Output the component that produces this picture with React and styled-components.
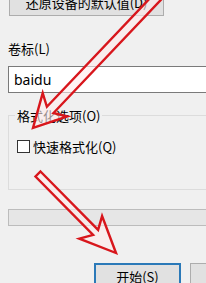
import styled, { createGlobalStyle } from "styled-components";

const GlobalStyle = createGlobalStyle`
  html, body {
    margin: 0;
    padding: 0;
    background: #f0f0f0;
    overflow: hidden;
  }
  body {
    font-family: "Noto Sans CJK SC", "Noto Sans", sans-serif;
    font-size: 13px;
    color: #000;
  }
`;

const Page = styled.div`
  position: relative;
  width: 206px;
  height: 283px;
  overflow: hidden;
  background: #f0f0f0;
`;

const Panel = styled.div`
  width: 240px;
  padding-left: 8px;
  display: flex;
  flex-direction: column;
  align-items: flex-start;
`;

const Button = styled.div`
  box-sizing: border-box;
  display: flex;
  align-items: center;
  justify-content: center;
  height: ${(p) => p.$h || 25}px;
  width: ${(p) => p.$w}px;
  flex-shrink: 0;
  background: #e1e1e1;
  border: ${(p) => (p.$primary ? "2px solid #2b79b8" : "1px solid #adadad")};
  font-size: 13px;
  line-height: 17px;
  white-space: nowrap;
`;

const ResetButton = styled(Button)`
  margin-top: -12px;
  margin-left: 1px;
`;

const Label = styled.div`
  margin-top: 24px;
  line-height: 17px;
  font-size: 13px;
`;

const TextInput = styled.div`
  box-sizing: border-box;
  margin-top: 9px;
  width: 100%;
  height: 27px;
  background: #fff;
  border: 1px solid #7a7a7a;
  padding-left: 5px;
  display: flex;
  align-items: center;
  font-family: "Noto Sans", "Open Sans", sans-serif;
  font-size: 14px;
`;

const Group = styled.fieldset`
  box-sizing: border-box;
  margin: 14px 0 0 0;
  width: 100%;
  height: 83px;
  border: 1px solid #dcdcdc;
  padding: 0 0 0 6px;
`;

const Legend = styled.legend`
  padding: 0 2px;
  line-height: 17px;
  font-size: 13px;
`;

const CheckRow = styled.div`
  display: flex;
  align-items: center;
  gap: 3px;
  margin-top: 13px;
  margin-left: 2px;
`;

const Box = styled.span`
  box-sizing: border-box;
  width: 13px;
  height: 13px;
  border: 1px solid #333;
  background: #fff;
`;

const Progress = styled.div`
  box-sizing: border-box;
  margin-top: 19px;
  width: 100%;
  height: 17px;
  background: #e6e6e6;
  border: 1px solid #bcbcbc;
`;

const ButtonRow = styled.div`
  display: flex;
  gap: 9px;
  margin-top: 37px;
  margin-left: 86px;
`;

const Overlay = styled.svg`
  position: absolute;
  left: 0;
  top: 0;
  pointer-events: none;
`;

function arrowPoints(x1, y1, x2, y2, w, h, H) {
  const dx = x2 - x1;
  const dy = y2 - y1;
  const len = Math.hypot(dx, dy);
  const ux = dx / len;
  const uy = dy / len;
  const nx = -uy;
  const ny = ux;
  const at = (a, b) => `${(x2 + ux * a + nx * b).toFixed(1)},${(y2 + uy * a + ny * b).toFixed(1)}`;
  return [
    at(-len, -w),
    at(-h + 7, -w),
    at(-h, -H),
    at(0, 0),
    at(-h, H),
    at(-h + 7, w),
    at(-len, w),
  ].join(" ");
}

const Arrows = () => (
  <Overlay width="206" height="283" viewBox="0 0 206 283">
    <polygon
      points={arrowPoints(164, -10, 33, 128, 4.5, 32, 17)}
      fill="rgba(255,235,235,0.6)"
      stroke="#d8161c"
      strokeWidth="2.4"
      strokeLinejoin="miter"
    />
    <polygon
      points={arrowPoints(38, 174, 116, 253, 3.5, 36, 16)}
      fill="rgba(255,235,235,0.6)"
      stroke="#d8161c"
      strokeWidth="2.4"
      strokeLinejoin="miter"
    />
  </Overlay>
);

export default function App() {
  return (
    <Page>
      <GlobalStyle />
      <Panel>
        <ResetButton $w={155} $h={28}>还原设备的默认值(D)</ResetButton>
        <Label>卷标(L)</Label>
        <TextInput>baidu</TextInput>
        <Group>
          <Legend>格式化选项(O)</Legend>
          <CheckRow>
            <Box />
            <span>快速格式化(Q)</span>
          </CheckRow>
        </Group>
        <Progress />
        <ButtonRow>
          <Button $primary $w={87} $h={26}>开始(S)</Button>
          <Button $w={80} $h={26}>关闭(C)</Button>
        </ButtonRow>
      </Panel>
      <Arrows />
    </Page>
  );
}
